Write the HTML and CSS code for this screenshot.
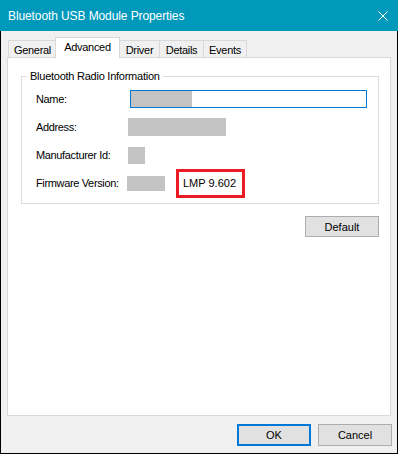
FILE: index.html
```html
<!DOCTYPE html>
<html>
<head>
<meta charset="utf-8">
<link rel="stylesheet" href="styles.css">
</head>
<body>
<div class="window">
  <div class="titlebar">
    <span class="title">Bluetooth USB Module Properties</span>
    <svg class="close" width="10" height="10" viewBox="0 0 10 10"><path d="M0.5 0.5L9.5 9.5M9.5 0.5L0.5 9.5" stroke="#fff" stroke-width="1" fill="none"/></svg>
  </div>
  <div class="client">
    <div class="tabs">
      <div class="tab t-general">General</div>
      <div class="tab selected t-adv">Advanced</div>
      <div class="tab t-driver">Driver</div>
      <div class="tab t-details">Details</div>
      <div class="tab t-events">Events</div>
    </div>
    <div class="panel">
      <fieldset class="group">
        <legend>Bluetooth Radio Information</legend>
        <div class="row"><span class="label">Name:</span><div class="name-input"><span class="name-fill"></span></div></div>
        <div class="row"><span class="label">Address:</span><span class="redact addr"></span></div>
        <div class="row"><span class="label">Manufacturer Id:</span><span class="redact mfr"></span></div>
        <div class="row"><span class="label">Firmware Version:</span><span class="redact fw"></span><span class="lmp">LMP 9.602</span></div>
      </fieldset>
      <div class="panel-actions"><button class="btn">Default</button></div>
    </div>
    <div class="footer">
      <button class="btn ok">OK</button>
      <button class="btn">Cancel</button>
    </div>
  </div>
</div>
</body>
</html>
```
FILE: styles.css
```css
html, body {
  margin: 0;
  padding: 0;
}
body {
  width: 398px;
  height: 454px;
  font-family: "Liberation Sans", Arial, sans-serif;
  color: #000;
  overflow: hidden;
}
.window {
  width: 398px;
  height: 454px;
  display: flex;
  flex-direction: column;
}
.titlebar {
  height: 31px;
  flex-shrink: 0;
  background: #0099bc;
  color: #fff;
  display: flex;
  align-items: center;
  padding-left: 8px;
  font-size: 12px;
  letter-spacing: -0.1px;
}
.close {
  margin-left: auto;
  margin-right: 10px;
  display: block;
}
.client {
  flex: 1;
  background: #f0f0f0;
  border: 1px solid #000;
  border-top: none;
  padding: 6px 6px 0 6px;
  display: flex;
  flex-direction: column;
}
.tabs {
  display: flex;
  align-items: flex-end;
  height: 20px;
  padding-left: 1px;
  flex-shrink: 0;
}
.tab {
  box-sizing: border-box;
  height: 17px;
  border: 1px solid #d9d9d9;
  border-bottom: none;
  background: #f0f0f0;
  font-size: 11px;
  letter-spacing: -0.3px;
  display: flex;
  align-items: center;
  justify-content: center;
  margin-left: -1px;
  padding-top: 1px;
}
.t-general { width: 49px; margin-left: 0; }
.t-adv {
  width: 65px;
  margin-left: -2px;
  height: 21px;
  margin-bottom: -1px;
  background: #fff;
  position: relative;
  z-index: 1;
  padding-top: 0;
  padding-bottom: 3px;
}
.t-driver { width: 41px; }
.t-details { width: 45px; }
.t-events { width: 44px; }
.panel {
  box-sizing: border-box;
  height: 359px;
  flex-shrink: 0;
  background: #fff;
  border: 1px solid #d9d9d9;
  padding: 12px 11px 0 13px;
  display: flex;
  flex-direction: column;
}
.group {
  margin: 0;
  border: 1px solid #dcdcdc;
  padding: 2px 0 6px 5px;
  min-width: 0;
}
.group legend {
  font-size: 11px;
  line-height: 13px;
  letter-spacing: -0.25px;
  padding: 0 3px;
}
.row {
  display: flex;
  align-items: center;
  height: 28px;
  margin-left: 9px;
  font-size: 11px;
}
.label {
  width: 92px;
  flex-shrink: 0;
  letter-spacing: -0.35px;
}
.name-input {
  margin-left: 2px;
  width: 237px;
  height: 18px;
  box-sizing: border-box;
  border: 1px solid #0078d7;
  background: #fff;
  display: flex;
}
.name-fill {
  width: 61px;
  background: #c3c3c3;
}
.redact {
  display: block;
  background: #c3c3c3;
}
.addr { width: 98px; height: 18px; }
.mfr { width: 17px; height: 17px; }
.fw { width: 38px; height: 15px; margin-left: -1px; }
.lmp {
  margin-left: 11px;
  box-sizing: border-box;
  width: 69px;
  height: 29px;
  border: 3px solid #ed1c24;
  padding-left: 4px;
  display: flex;
  align-items: center;
  font-size: 11px;
  color: #000;
}
.panel-actions {
  display: flex;
  justify-content: flex-end;
  margin-top: 12px;
}
.btn {
  box-sizing: border-box;
  width: 74px;
  height: 21px;
  background: #e1e1e1;
  border: 1px solid #adadad;
  font-family: "Liberation Sans", Arial, sans-serif;
  font-size: 11px;
  color: #000;
  padding: 0;
  margin: 0;
}
.footer {
  display: flex;
  justify-content: flex-end;
  gap: 7px;
  margin-top: 8px;
  margin-right: -1px;
}
.footer .btn {
  height: 22px;
}
.btn.ok {
  border: 2px solid #0078d7;
}
```
